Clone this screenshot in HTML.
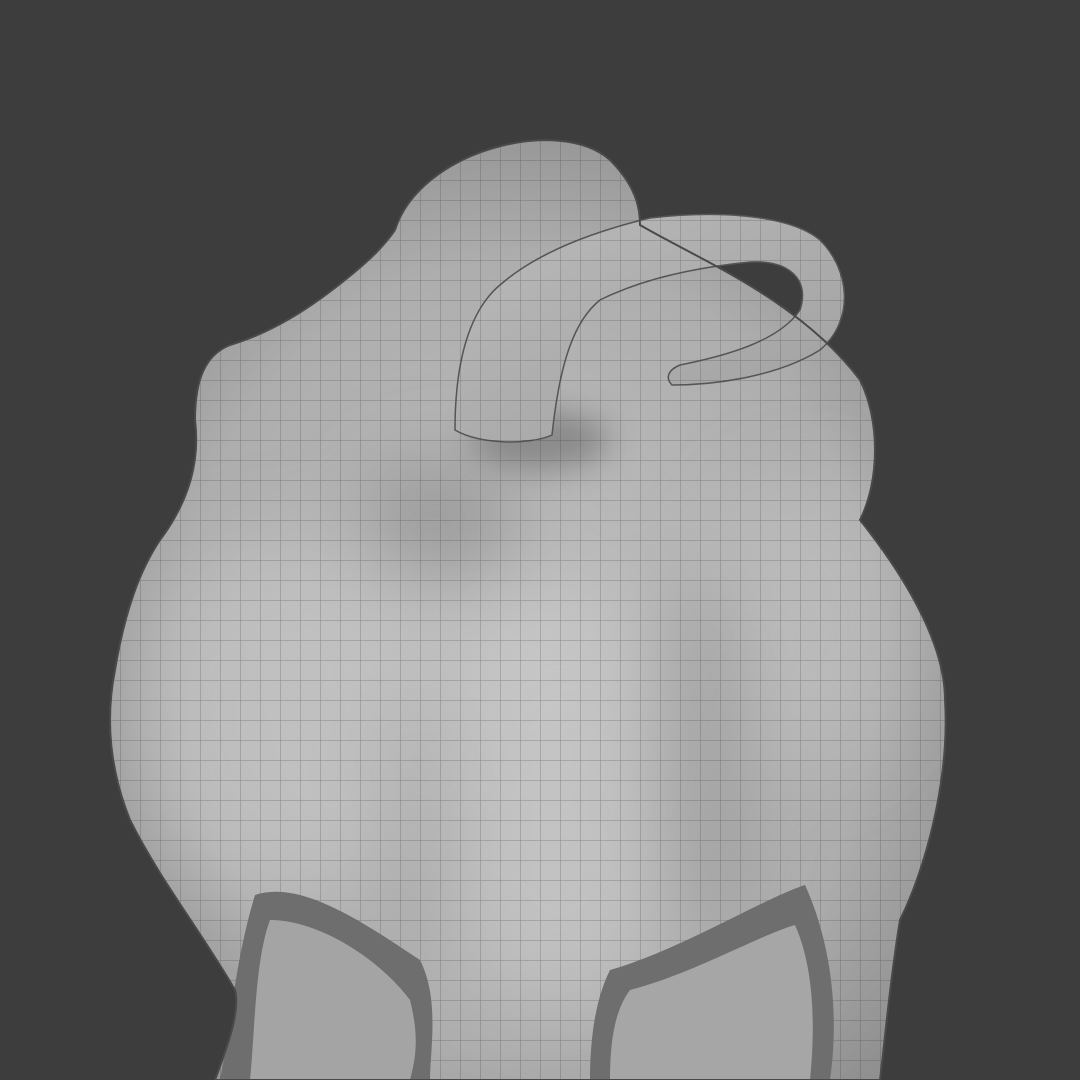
<!DOCTYPE html>
<html><head><meta charset="utf-8"><style>
html,body{margin:0;padding:0;background:#3d3d3d;width:1080px;height:1080px;overflow:hidden}
svg{display:block}
</style></head><body>
<svg width="1080" height="1080" viewBox="0 0 1080 1080" xmlns="http://www.w3.org/2000/svg">
<defs>
<radialGradient id="body" cx="0.5" cy="0.55" r="0.6">
<stop offset="0" stop-color="#c0c0c0"/>
<stop offset="0.7" stop-color="#aeaeae"/>
<stop offset="1" stop-color="#909090"/>
</radialGradient>
<linearGradient id="horn" x1="0" y1="0" x2="1" y2="1">
<stop offset="0" stop-color="#bababa"/>
<stop offset="1" stop-color="#a0a0a0"/>
</linearGradient>
<filter id="bl" x="-50%" y="-50%" width="200%" height="200%"><feGaussianBlur stdDeviation="40"/></filter>
<filter id="bl2" x="-50%" y="-50%" width="200%" height="200%"><feGaussianBlur stdDeviation="15"/></filter>
<pattern id="grid" width="20" height="20" patternUnits="userSpaceOnUse">
<path d="M20 0H0V20" fill="none" stroke="#333" stroke-width="1" opacity="0.4"/>
</pattern>
<clipPath id="cb"><path id="bp" d="M395,230 C420,150 560,115 610,160 C640,190 640,215 640,225 C700,260 800,300 860,380 C880,420 880,480 860,520 C900,570 945,640 945,700 C950,780 925,870 900,920 C890,980 885,1040 880,1080 L215,1080 C230,1040 240,1010 235,990 C200,930 160,880 130,820 C110,770 105,720 115,670 C125,610 140,570 160,540 C190,500 200,460 195,420 C195,380 205,355 230,345 C280,330 320,300 345,280 C370,260 385,245 395,230 Z"/></clipPath>
</defs>
<rect width="1080" height="1080" fill="#3d3d3d"/>
<use href="#bp" fill="url(#body)"/>
<g clip-path="url(#cb)">
<g filter="url(#bl)">
<ellipse cx="290" cy="720" rx="150" ry="180" fill="#c8c8c8" opacity="0.6"/>
<ellipse cx="560" cy="800" rx="130" ry="210" fill="#cacaca" opacity="0.6"/>
<ellipse cx="810" cy="620" rx="100" ry="140" fill="#c4c4c4" opacity="0.5"/>
<ellipse cx="440" cy="520" rx="80" ry="60" fill="#808080" opacity="0.5"/>
<ellipse cx="700" cy="760" rx="45" ry="190" fill="#808080" opacity="0.45"/>
<ellipse cx="420" cy="820" rx="35" ry="140" fill="#8a8a8a" opacity="0.35"/>
</g>
<ellipse cx="540" cy="440" rx="70" ry="30" fill="#707070" opacity="0.6" filter="url(#bl2)"/>
<rect width="1080" height="1080" fill="url(#grid)"/>
<path d="M255,895 C300,880 360,920 420,960 C440,1000 430,1050 430,1080 L220,1080 C230,1030 235,960 255,895 Z" fill="#6e6e6e"/>
<path d="M270,920 C320,920 380,960 410,1000 C420,1040 415,1060 410,1080 L250,1080 C255,1030 255,960 270,920 Z" fill="#a4a4a4"/>
<path d="M610,970 C680,950 760,900 805,885 C830,940 840,1010 830,1080 L590,1080 C590,1040 595,1000 610,970 Z" fill="#6e6e6e"/>
<path d="M630,990 C690,975 760,935 795,925 C815,970 815,1030 810,1080 L610,1080 C610,1040 615,1010 630,990 Z" fill="#a6a6a6"/>
</g>
<path d="M455,430 C455,360 470,310 500,285 C540,250 600,230 650,218 C720,210 790,215 820,240 C850,270 855,320 820,350 C780,375 720,385 672,385 C665,378 668,370 680,365 C730,355 780,340 800,310 C810,280 790,260 750,262 C690,268 640,280 600,300 C575,320 560,360 552,435 C530,445 480,445 455,430 Z" fill="url(#horn)" stroke="#555" stroke-width="1.5"/>
<path d="M455,430 C455,360 470,310 500,285 C540,250 600,230 650,218 C720,210 790,215 820,240 C850,270 855,320 820,350 C780,375 720,385 672,385 C665,378 668,370 680,365 C730,355 780,340 800,310 C810,280 790,260 750,262 C690,268 640,280 600,300 C575,320 560,360 552,435 C530,445 480,445 455,430 Z" fill="url(#grid)"/>
<use href="#bp" fill="none" stroke="#4a4a4a" stroke-width="2"/>
</svg>
</body></html>
